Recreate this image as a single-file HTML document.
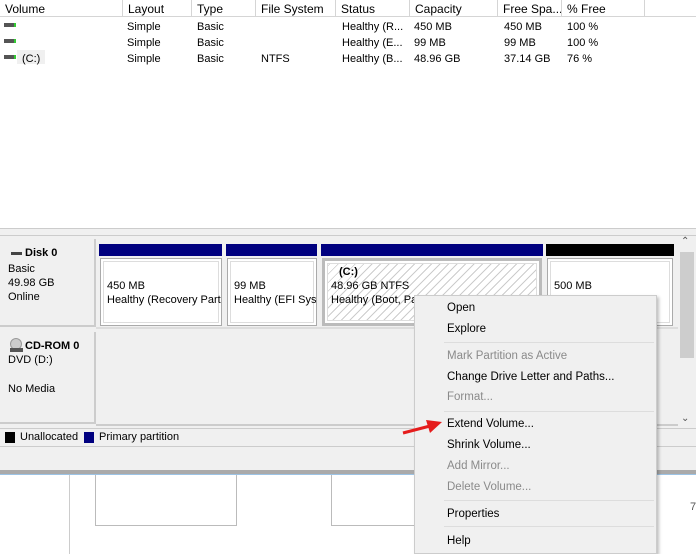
<!DOCTYPE html>
<html><head><style>
*{margin:0;padding:0;box-sizing:border-box}
body{width:696px;height:554px;position:relative;overflow:hidden;background:#fff;font-family:"Liberation Sans",sans-serif;font-size:11px;color:#000}
.a{position:absolute;white-space:nowrap}
.hd{position:absolute;top:0;height:17px;border-right:1px solid #d5d5d5;border-bottom:1px solid #d5d5d5;padding:2px 0 0 5px;font-size:12px;white-space:nowrap;overflow:hidden}
.ic{position:absolute;width:12px;height:4px;background:#555;border-right:2px solid #3c3}
.bar{position:absolute;height:12px;top:244px}
.box{position:absolute;top:258px;height:68px;background:#fff;border:1px solid #aaa;box-shadow:inset 0 0 0 2px #fff,inset 0 0 0 3px #ddd;padding:20px 0 0 6px;line-height:14px;overflow:hidden;white-space:nowrap}
.mi{position:absolute;left:447px;font-size:11.5px;white-space:nowrap}
.g{color:#8a8a8a}
.sep{position:absolute;left:444px;width:210px;height:1px;background:#ddd}
</style></head><body>
<div class="hd" style="left:0;width:123px">Volume</div>
<div class="hd" style="left:123px;width:69px">Layout</div>
<div class="hd" style="left:192px;width:64px">Type</div>
<div class="hd" style="left:256px;width:80px">File System</div>
<div class="hd" style="left:336px;width:74px">Status</div>
<div class="hd" style="left:410px;width:88px">Capacity</div>
<div class="hd" style="left:498px;width:64px">Free Spa...</div>
<div class="hd" style="left:562px;width:83px">% Free</div>
<div class="hd" style="left:645px;width:51px;border-right:0"></div>

<div class="ic" style="left:4px;top:23px"></div>
<div class="ic" style="left:4px;top:39px"></div>
<div class="ic" style="left:4px;top:55px"></div>
<div class="a" style="left:17px;top:50px;width:28px;height:14px;background:#f0f0f0"></div>
<div class="a" style="left:22px;top:53px">(C:)</div>
<div class="a" style="left:127px;top:19px;line-height:16px">Simple<br>Simple<br>Simple</div>
<div class="a" style="left:197px;top:19px;line-height:16px">Basic<br>Basic<br>Basic</div>
<div class="a" style="left:261px;top:53px">NTFS</div>
<div class="a" style="left:342px;top:19px;line-height:16px">Healthy (R...<br>Healthy (E...<br>Healthy (B...</div>
<div class="a" style="left:414px;top:19px;line-height:16px">450 MB<br>99 MB<br>48.96 GB</div>
<div class="a" style="left:504px;top:19px;line-height:16px">450 MB<br>99 MB<br>37.14 GB</div>
<div class="a" style="left:567px;top:19px;line-height:16px">100 %<br>100 %<br>76 %</div>

<div class="a" style="left:0;top:228px;width:696px;height:8px;background:#f0f0f0;border-top:1px solid #ccc;border-bottom:1px solid #ccc"></div>
<div class="a" style="left:0;top:236px;width:696px;height:240px;background:#f0f0f0"></div>
<div class="a" style="left:0;top:239px;width:96px;height:88px;border-right:2px solid #ccc;border-bottom:2px solid #ccc"></div>
<div class="a" style="left:11px;top:252px;width:11px;height:3px;background:#444"></div>
<div class="a" style="left:25px;top:247px;font-weight:bold">Disk 0</div>
<div class="a" style="left:8px;top:262px;line-height:14px">Basic<br>49.98 GB<br>Online</div>
<div class="a" style="left:96px;top:327px;width:582px;height:2px;background:#ddd"></div>
<div class="a" style="left:0;top:332px;width:96px;height:92px;border-right:2px solid #ccc;border-bottom:2px solid #ccc"></div>
<div class="a" style="left:10px;top:338px;width:12px;height:12px;border-radius:50%;background:#ccc;border:1px solid #999"></div>
<div class="a" style="left:10px;top:348px;width:13px;height:4px;background:#555"></div>
<div class="a" style="left:25px;top:340px;font-weight:bold">CD-ROM 0</div>
<div class="a" style="left:8px;top:354px">DVD (D:)</div>
<div class="a" style="left:8px;top:383px">No Media</div>
<div class="a" style="left:96px;top:424px;width:582px;height:2px;background:#ccc"></div>

<div class="bar" style="left:99px;width:123px;background:#00007f"></div>
<div class="bar" style="left:226px;width:91px;background:#00007f"></div>
<div class="bar" style="left:321px;width:222px;background:#00007f"></div>
<div class="bar" style="left:546px;width:128px;background:#000"></div>
<div class="box" style="left:100px;width:122px">450 MB<br>Healthy (Recovery Part</div>
<div class="box" style="left:227px;width:90px">99 MB<br>Healthy (EFI Syst</div>
<div class="box" style="left:322px;width:220px;padding-top:4px;border:3px solid #bbb;background:repeating-linear-gradient(135deg,#fff 0 5px,#ccc 5px 6px)"><b style="margin-left:8px">(C:)</b><br>48.96 GB NTFS<br>Healthy (Boot, Page File, Crash Dump, Pri</div>
<div class="box" style="left:547px;width:126px">500 MB<br>Unallocated</div>

<div class="a" style="left:678px;top:236px;width:17px;height:192px;background:#f0f0f0"></div>
<div class="a" style="left:681px;top:236px;font-size:10px;color:#555">&#8963;</div>
<div class="a" style="left:680px;top:252px;width:14px;height:106px;background:#cdcdcd"></div>
<div class="a" style="left:681px;top:413px;font-size:10px;color:#555">&#8964;</div>

<div class="a" style="left:0;top:428px;width:696px;height:19px;border-top:1px solid #ccc;border-bottom:1px solid #ccc;background:#f0f0f0"></div>
<div class="a" style="left:5px;top:432px;width:10px;height:11px;background:#000"></div>
<div class="a" style="left:20px;top:431px">Unallocated</div>
<div class="a" style="left:84px;top:432px;width:10px;height:11px;background:#00007f"></div>
<div class="a" style="left:99px;top:431px">Primary partition</div>
<div class="a" style="left:0;top:470px;width:696px;height:4px;background:#aaa"></div>
<div class="a" style="left:0;top:474px;width:696px;height:1px;background:#9cc3e5"></div>
<div class="a" style="left:0;top:475px;width:696px;height:79px;background:#fff"></div>
<div class="a" style="left:69px;top:475px;width:1px;height:79px;background:#ccc"></div>
<div class="a" style="left:95px;top:475px;width:142px;height:51px;border:1px solid #bbb;border-top:0"></div>
<div class="a" style="left:331px;top:475px;width:120px;height:51px;border:1px solid #bbb;border-top:0"></div>
<div class="a" style="left:690px;top:501px;color:#555">7</div>

<div class="a" style="left:414px;top:295px;width:243px;height:259px;background:#f0f0f0;border:1px solid #ccc;box-shadow:2px 2px 3px rgba(0,0,0,.25)"></div>
<div class="mi" style="top:302px">Open</div>
<div class="mi" style="top:323px">Explore</div>
<div class="sep" style="top:342px"></div>
<div class="mi g" style="top:350px">Mark Partition as Active</div>
<div class="mi" style="top:371px">Change Drive Letter and Paths...</div>
<div class="mi g" style="top:391px">Format...</div>
<div class="sep" style="top:411px"></div>
<div class="mi" style="top:418px">Extend Volume...</div>
<div class="mi" style="top:439px">Shrink Volume...</div>
<div class="mi g" style="top:460px">Add Mirror...</div>
<div class="mi g" style="top:481px">Delete Volume...</div>
<div class="sep" style="top:500px"></div>
<div class="mi" style="top:508px">Properties</div>
<div class="sep" style="top:526px"></div>
<div class="mi" style="top:535px">Help</div>

<svg class="a" style="left:400px;top:416px" width="46" height="22"><path d="M3 17 L30 10" stroke="#e51c1c" stroke-width="3"/><path d="M26 4 L42 6 L30 17 Z" fill="#e51c1c"/></svg>
</body></html>
